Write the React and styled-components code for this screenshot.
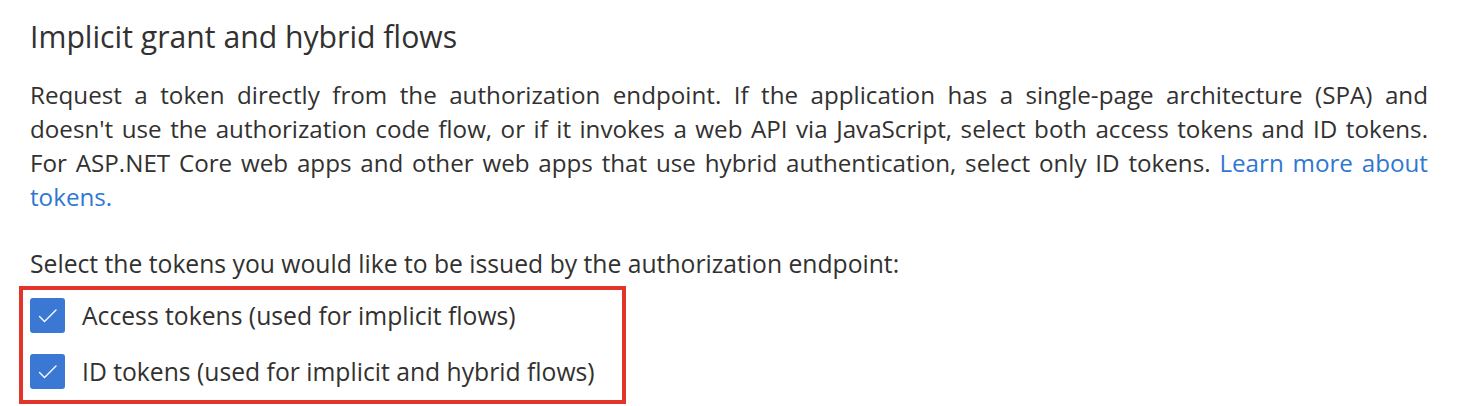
import React from 'react';
import styled, { createGlobalStyle } from 'styled-components';

const GlobalStyle = createGlobalStyle`
  html, body {
    margin: 0;
    padding: 0;
    background: #ffffff;
  }
  body {
    font-family: 'Open Sans', 'Noto Sans', 'Liberation Sans', sans-serif;
    color: #323130;
  }
`;

const Section = styled.section`
  padding: 19px 40px 0 30px;
  width: 1398px;
  box-sizing: content-box;
`;

const Title = styled.h2`
  margin: 0;
  font-size: 30.2px;
  font-weight: 400;
  line-height: 36px;
  color: #323130;
`;

// lines are broken where the reference breaks them, then justified
const Description = styled.p`
  margin: 23px 0 0;
  font-size: 24.2px;
  line-height: 34px;
  text-align: justify;
  text-align-last: justify;
  white-space: nowrap;
`;

const Link = styled.a`
  color: #2f77d1;
  text-decoration: none;
`;

const Prompt = styled.p`
  margin: 33px 0 0;
  font-size: 24.7px;
  line-height: 34px;
`;

const Highlight = styled.div`
  margin: 5px 0 0 -11px;
  width: 607px;
  height: 118px;
  box-sizing: border-box;
  border: 4px solid #e3342a;
  padding: 8px 0 0 7px;
  display: flex;
  flex-direction: column;
  gap: 21px;
`;

const Option = styled.label`
  display: flex;
  align-items: center;
  gap: 17px;
  font-size: 24.7px;
  line-height: 35px;
  cursor: pointer;
`;

const Box = styled.span`
  width: 35px;
  height: 35px;
  flex: none;
  border-radius: 3px;
  background: ${p => (p.checked ? '#3a78d3' : '#ffffff')};
  border: ${p => (p.checked ? 'none' : '1px solid #323130')};
  display: flex;
  align-items: center;
  justify-content: center;
`;

const Check = () => (
  <svg width="35" height="35" viewBox="0 0 35 35">
    <polyline
      points="9.5,18.5 14.5,23.5 26,12"
      fill="none"
      stroke="#ffffff"
      strokeWidth="1.4"
      strokeLinecap="round"
      strokeLinejoin="round"
    />
  </svg>
);

const Checkbox = ({ checked, children }) => (
  <Option>
    <Box checked={checked}>{checked && <Check />}</Box>
    {children}
  </Option>
);

export default function App() {
  return (
    <>
      <GlobalStyle />
      <Section>
        <Title>Implicit grant and hybrid flows</Title>
        <Description>
          Request a token directly from the authorization endpoint. If the
          application has a single-page architecture (SPA) and
          <br />
          doesn't use the authorization code flow, or if it invokes a web API
          via JavaScript, select both access tokens and ID tokens.
          <br />
          For ASP.NET Core web apps and other web apps that use hybrid
          authentication, select only ID tokens.{' '}
          <Link href="#">
            Learn more about
            <br />
            tokens.
          </Link>
        </Description>
        <Prompt>
          Select the tokens you would like to be issued by the authorization
          endpoint:
        </Prompt>
        <Highlight>
          <Checkbox checked>Access tokens (used for implicit flows)</Checkbox>
          <Checkbox checked>ID tokens (used for implicit and hybrid flows)</Checkbox>
        </Highlight>
      </Section>
    </>
  );
}
